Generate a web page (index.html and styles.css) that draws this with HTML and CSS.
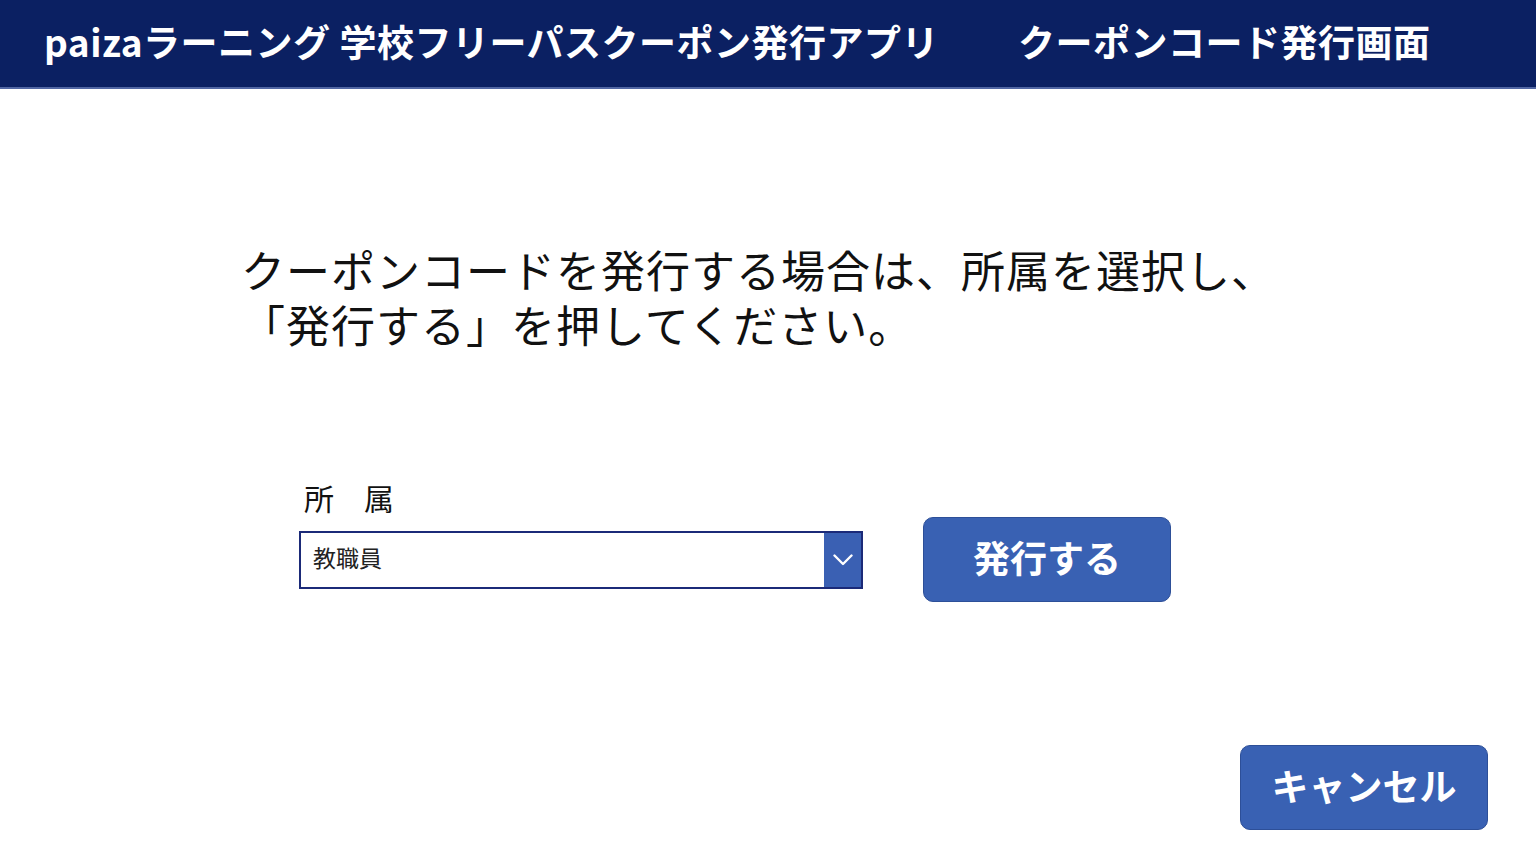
FILE: index.html
```html
<!DOCTYPE html>
<html lang="ja">
<head>
<meta charset="utf-8">
<title>クーポンコード発行画面</title>
<link rel="stylesheet" href="styles.css">
</head>
<body>
<header class="app-header">
  <h1 class="app-title">paizaラーニング 学校フリーパスクーポン発行アプリ</h1>
  <h2 class="screen-title">クーポンコード発行画面</h2>
</header>
<main class="content">
  <p class="message"><span class="line">クーポンコードを発行する場合は、所属を選択し、</span><span class="line">「発行する」を押してください。</span></p>
  <div class="form-grid">
    <div class="field-label">所　属</div>
    <div class="select-box">
      <span class="select-value">教職員</span>
      <span class="select-arrow">
        <svg width="20" height="12" viewBox="0 0 20 12"><path d="M1.5 1.5 L10 10 L18.5 1.5" fill="none" stroke="#fff" stroke-width="2.4" stroke-linecap="round" stroke-linejoin="round"/></svg>
      </span>
    </div>
    <button class="btn">発行する</button>
  </div>
  <div class="footer-row">
    <button class="btn">キャンセル</button>
  </div>
</main>
</body>
</html>
```
FILE: styles.css
```css
html, body {
  margin: 0;
  padding: 0;
  background: #ffffff;
}
body {
  font-family: "Noto Sans CJK JP", "Noto Sans", sans-serif;
  color: #000;
  width: 1536px;
  height: 859px;
  overflow: hidden;
}
.app-header {
  height: 87px;
  background: #0b2062;
  border-bottom: 2px solid #5267a3;
  display: flex;
  align-items: center;
  padding-left: 44px;
  gap: 79px;
  box-sizing: content-box;
}
.app-title, .screen-title {
  margin: 0;
  color: #fff;
  font-size: 37px;
  font-weight: 700;
  line-height: 1;
  letter-spacing: 0.5px;
  position: relative;
  top: -2px;
}
.content {
  display: flex;
  flex-direction: column;
}
.message {
  margin: 153px 0 0 241px;
  font-size: 44px;
  line-height: 55px;
  font-weight: 400;
  letter-spacing: 1px;
  color: #111;
}
.message .line {
  display: block;
  height: 55px;
}
.form-grid {
  margin: 131px 0 0 299px;
  display: grid;
  grid-template-columns: 564px 248px;
  grid-template-rows: 28px 85px;
  column-gap: 60px;
  row-gap: 6px;
  align-items: center;
}
.field-label {
  grid-column: 1;
  grid-row: 1;
  font-size: 30px;
  line-height: 28px;
  padding-left: 5px;
  color: #111;
}
.select-box {
  grid-column: 1;
  grid-row: 2;
  height: 58px;
  box-sizing: border-box;
  border: 2px solid #1b2a78;
  display: flex;
  align-items: stretch;
  background: #fff;
}
.select-value {
  flex: 1;
  display: flex;
  align-items: center;
  padding: 0 0 5px 12px;
  font-size: 23px;
  color: #222;
}
.select-arrow {
  width: 37px;
  background: #3a60b3;
  display: flex;
  align-items: center;
  justify-content: center;
}
.btn {
  width: 248px;
  height: 85px;
  box-sizing: border-box;
  background: #3961b3;
  border: 1px solid #2d4f98;
  border-radius: 10px;
  color: #fff;
  font-family: "Noto Sans CJK JP", "Noto Sans", sans-serif;
  font-size: 37px;
  font-weight: 700;
  line-height: 1;
  padding: 0 0 4px 0;
  cursor: pointer;
}
.form-grid .btn {
  grid-column: 2;
  grid-row: 2;
}
.footer-row {
  display: flex;
  justify-content: flex-end;
  padding-right: 48px;
  margin-top: 143px;
}
```
